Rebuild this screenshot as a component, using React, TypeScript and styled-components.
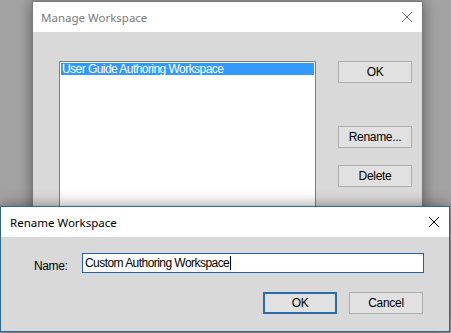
import styled, { createGlobalStyle } from "styled-components";

const GlobalStyle = createGlobalStyle`
  html, body {
    margin: 0;
    padding: 0;
    background: #a2a2a2;
  }
  * {
    box-sizing: border-box;
  }
`;

const Desktop = styled.div`
  position: relative;
  width: 451px;
  height: 333px;
  overflow: hidden;
  background: #a3a3a3;
  font-family: "Liberation Sans", Arial, sans-serif;
`;

const Window = styled.div<{ $active?: boolean }>`
  position: absolute;
  display: flex;
  flex-direction: column;
  background: #d9d9d9;
  border: 1px solid ${({ $active }) => ($active ? "#2e6694" : "#7a7a7a")};
  box-shadow: 0 0 14px rgba(0, 0, 0, 0.45);
`;

const ManageWindow = styled(Window)`
  left: 32px;
  top: 1px;
  width: 391px;
  height: 250px;
`;

const RenameWindow = styled(Window)`
  left: 0;
  top: 206px;
  width: 450px;
  height: 126px;
`;

const TitleBar = styled.div<{ $active?: boolean }>`
  display: flex;
  align-items: center;
  justify-content: space-between;
  height: 30px;
  flex-shrink: 0;
  background: #ffffff;
  padding: 0 9px 0 ${({ $active }) => ($active ? "9px" : "8px")};
  font-family: "Noto Sans", "Open Sans", sans-serif;
  font-size: 11.5px;
  color: ${({ $active }) => ($active ? "#000000" : "#7a7a7a")};
`;

const CloseIcon = ({ color }: { color: string }) => (
  <svg width="12" height="12" viewBox="0 0 12 12">
    <path d="M1 1 L11 11 M11 1 L1 11" stroke={color} strokeWidth="1" />
  </svg>
);

const ManageBody = styled.div`
  display: flex;
  gap: 22px;
  padding: 29px 0 0 26px;
`;

const ListBox = styled.div`
  width: 257px;
  height: 200px;
  background: #ffffff;
  border: 1px solid #7f7f7f;
  padding: 1px;
`;

const ListItem = styled.div<{ $selected?: boolean }>`
  height: 12px;
  line-height: 12px;
  padding-left: 1px;
  font-size: 12px;
  letter-spacing: -0.55px;
  color: ${({ $selected }) => ($selected ? "#ffffff" : "#000000")};
  background: ${({ $selected }) => ($selected ? "#3399ff" : "transparent")};
`;

const ButtonColumn = styled.div`
  display: flex;
  flex-direction: column;
`;

const Button = styled.div<{ $default?: boolean; $gap?: number }>`
  display: flex;
  align-items: center;
  justify-content: center;
  width: 74px;
  height: 22px;
  margin-top: ${({ $gap }) => $gap ?? 0}px;
  background: #e1e1e1;
  border: ${({ $default }) =>
    $default ? "2px solid #2a6aa6" : "1px solid #adadad"};
  font-size: 12px;
  letter-spacing: -0.3px;
  color: #000000;
`;

const RenameBody = styled.div`
  display: flex;
  flex-direction: column;
  padding: 16px 25px 0 33px;
`;

const FieldRow = styled.div`
  display: flex;
  align-items: center;
  gap: 0;
`;

const Label = styled.span`
  width: 48px;
  padding-top: 5px;
  font-size: 12px;
  letter-spacing: -0.4px;
  color: #000000;
`;

const TextInput = styled.div`
  display: flex;
  align-items: center;
  flex: 1;
  height: 20px;
  background: #ffffff;
  border: 1px solid #1f63a3;
  padding-left: 2px;
  font-size: 12px;
  letter-spacing: -0.55px;
  color: #000000;
`;

const Caret = styled.span`
  display: inline-block;
  width: 1px;
  height: 14px;
  margin-left: 1px;
  background: #000000;
`;

const ButtonRow = styled.div`
  display: flex;
  justify-content: flex-end;
  gap: 12px;
  margin-top: 19px;
  padding-right: 1px;
`;

export default function App() {
  return (
    <>
      <GlobalStyle />
      <Desktop>
        <ManageWindow>
          <TitleBar>
            <span>Manage Workspace</span>
            <CloseIcon color="#6e6e6e" />
          </TitleBar>
          <ManageBody>
            <ListBox>
              <ListItem $selected>User Guide Authoring Workspace</ListItem>
            </ListBox>
            <ButtonColumn>
              <Button>OK</Button>
              <Button $gap={43}>Rename...</Button>
              <Button $gap={17}>Delete</Button>
            </ButtonColumn>
          </ManageBody>
        </ManageWindow>
        <RenameWindow $active>
          <TitleBar $active>
            <span>Rename Workspace</span>
            <CloseIcon color="#000000" />
          </TitleBar>
          <RenameBody>
            <FieldRow>
              <Label>Name:</Label>
              <TextInput>
                Custom Authoring Workspace
                <Caret />
              </TextInput>
            </FieldRow>
            <ButtonRow>
              <Button $default>OK</Button>
              <Button>Cancel</Button>
            </ButtonRow>
          </RenameBody>
        </RenameWindow>
      </Desktop>
    </>
  );
}
